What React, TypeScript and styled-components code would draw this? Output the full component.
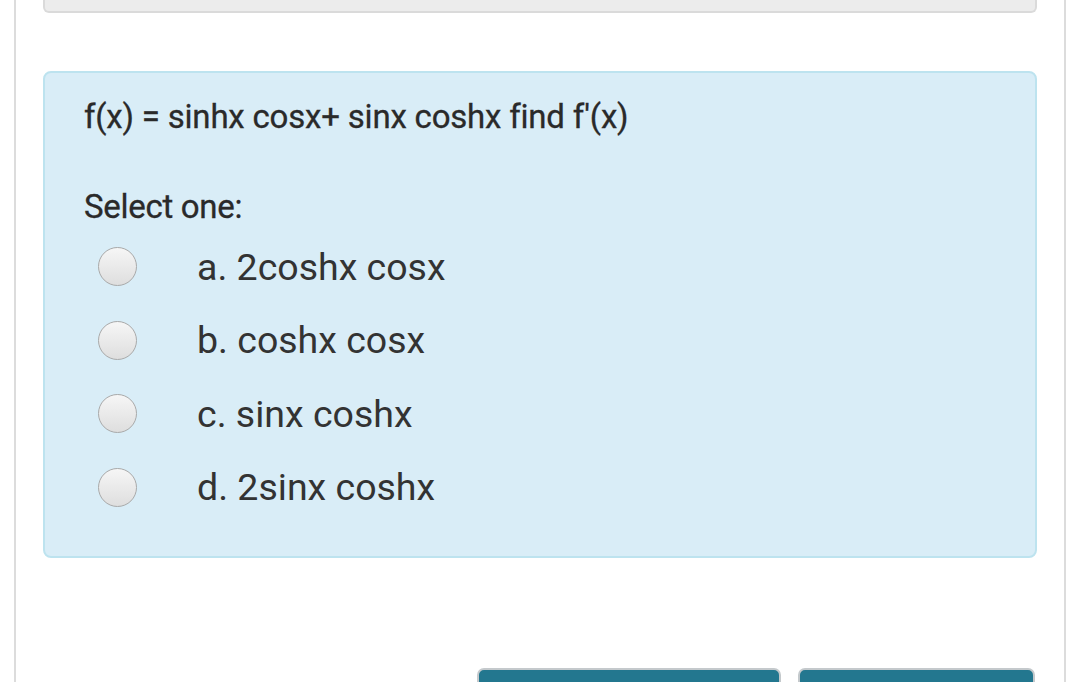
import React from 'react';
import styled, { createGlobalStyle } from 'styled-components';

const GlobalStyle = createGlobalStyle`
  html, body {
    margin: 0;
    padding: 0;
    background: #ffffff;
    overflow: hidden;
  }
  body {
    font-family: Roboto, "Noto Sans", sans-serif;
  }
`;

const Page = styled.div`
  margin: 0 14px;
  height: 682px;
  border-left: 2px solid #dcdcdc;
  border-right: 2px solid #dcdcdc;
  padding: 0 27px;
  display: flex;
  flex-direction: column;
  box-sizing: border-box;
  & > * {
    flex-shrink: 0;
  }
`;

const PrevPanel = styled.div`
  height: 13px;
  background: #ececec;
  border: 2px solid #dadada;
  border-top: none;
  border-radius: 0 0 6px 6px;
  box-sizing: border-box;
`;

const QuestionCard = styled.div`
  margin-top: 58px;
  height: 487px;
  box-sizing: border-box;
  background: #d9edf7;
  border: 2px solid #bde3ef;
  border-radius: 8px;
  padding: 24px 39px 0;
  color: #2a2a2a;
`;

const QuestionText = styled.div`
  font-size: 33px;
  line-height: 40px;
  letter-spacing: -0.2px;
  -webkit-text-stroke: 0.3px #2a2a2a;
`;

const Prompt = styled.div`
  margin-top: 52px;
  font-size: 33px;
  line-height: 36px;
  letter-spacing: -0.3px;
  -webkit-text-stroke: 0.3px #2a2a2a;
`;

const Options = styled.div`
  margin-top: 5px;
  display: flex;
  flex-direction: column;
`;

const OptionRow = styled.label`
  height: 73.5px;
  display: flex;
  align-items: center;
  gap: 60px;
  padding-left: 14px;
  font-size: 37.5px;
  color: #333333;
`;

const Radio = styled.span`
  width: 39px;
  height: 39px;
  flex: 0 0 39px;
  border-radius: 50%;
  box-sizing: border-box;
  border: 1.5px solid #a9a9a9;
  background: linear-gradient(#f6f6f6, #dedede);
`;

const ButtonRow = styled.div`
  margin-top: 110px;
  padding-right: 2px;
  display: flex;
  justify-content: flex-end;
  gap: 17px;
`;

const NavButton = styled.div<{ $w: number }>`
  width: ${(p) => p.$w}px;
  height: 40px;
  box-sizing: border-box;
  background: #23778f;
  border: 2px solid #c4c9cc;
  border-radius: 7px;
`;

const options = ['a. 2coshx cosx', 'b. coshx cosx', 'c. sinx coshx', 'd. 2sinx coshx'];

export default function App() {
  return (
    <>
      <GlobalStyle />
      <Page>
        <PrevPanel />
        <QuestionCard>
          <QuestionText>f(x) = sinhx cosx+ sinx coshx find f'(x)</QuestionText>
          <Prompt>Select one:</Prompt>
          <Options>
            {options.map((o) => (
              <OptionRow key={o}>
                <Radio />
                <span>{o}</span>
              </OptionRow>
            ))}
          </Options>
        </QuestionCard>
        <ButtonRow>
          <NavButton $w={304} />
          <NavButton $w={237} />
        </ButtonRow>
      </Page>
    </>
  );
}
